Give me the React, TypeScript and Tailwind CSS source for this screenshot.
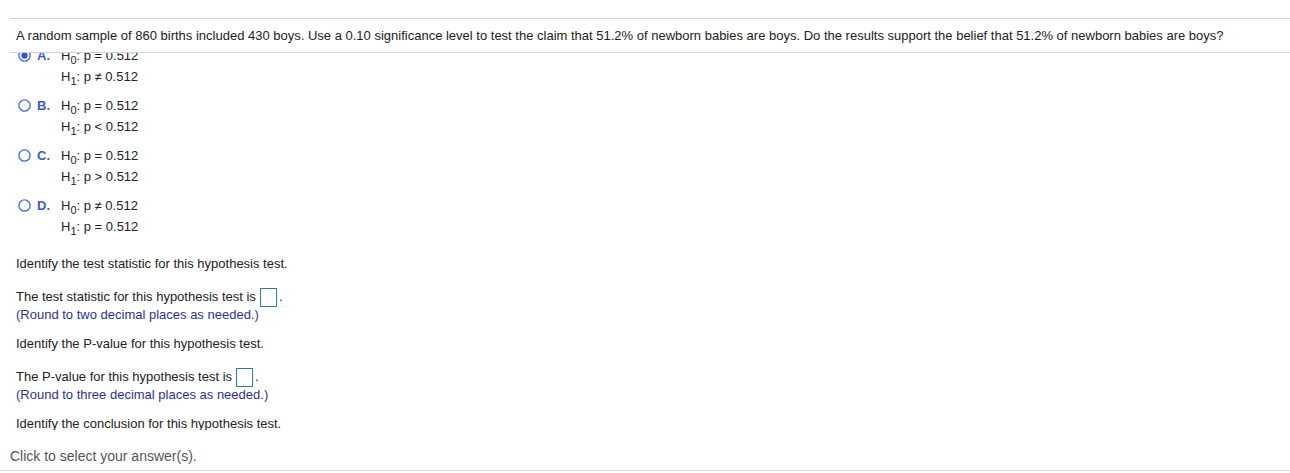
import { useLayoutEffect, useRef } from 'react';

const OPTIONS = [
  { letter: 'A', h0: '=', h1: '≠', selected: true },
  { letter: 'B', h0: '=', h1: '<', selected: false },
  { letter: 'C', h0: '=', h1: '>', selected: false },
  { letter: 'D', h0: '≠', h1: '=', selected: false }
];

function Radio({ selected }: { selected: boolean }) {
  return (
    <svg width="13" height="13" viewBox="0 0 13 13" className="shrink-0">
      <circle cx="6.5" cy="6.5" r="5.6" fill="white" stroke="#4a6fd8" strokeWidth="1.4" />
      {selected && <circle cx="6.5" cy="6.5" r="3.2" fill="#3559c9" />}
    </svg>
  );
}

function Hyp({ n, op }: { n: string; op: string }) {
  return (
    <div className="leading-[21px] whitespace-nowrap">
      H<sub className="text-[11px] top-[4px]">{n}</sub>: p {op} 0.512
    </div>
  );
}

function AnswerBox() {
  return <span className="inline-block w-[17px] h-[19px] border border-[#2a7fa3] bg-white ml-[4px] mr-[2px]" />;
}

export default function App() {
  const viewRef = useRef<HTMLDivElement>(null);

  // the question pane is scrolled a little, option A is half under the header
  useLayoutEffect(() => {
    if (viewRef.current) viewRef.current.scrollTop = 20;
  }, []);

  return (
    <div className="h-[473px] w-full bg-white flex flex-col pt-[18px] text-[13px] text-[#222] font-['Liberation_Sans',Arial,sans-serif]">
      <div className="ml-[10px] border-t border-b border-[#ccd3e0] pl-[6px] py-[8px] leading-[17px] whitespace-nowrap">
        A random sample of 860 births included 430 boys. Use a 0.10 significance level to test the claim that 51.2% of newborn babies are boys. Do the results support the belief that 51.2% of newborn babies are boys?
      </div>

      <div ref={viewRef} className="h-[377px] overflow-hidden">
        <div className="pl-[16px] pt-[12px] pb-[40px]">
          <div className="flex flex-col gap-[8px]">
            {OPTIONS.map((o) => (
              <div key={o.letter} className="flex items-start">
                <div className="h-[21px] flex items-center ml-[2px]">
                  <Radio selected={o.selected} />
                </div>
                <span className="w-[24px] ml-[6px] leading-[21px] font-bold text-[#3a5bc7]">{o.letter}.</span>
                <div>
                  <Hyp n="0" op={o.h0} />
                  <Hyp n="1" op={o.h1} />
                </div>
              </div>
            ))}
          </div>

          <div className="mt-[18px] leading-[17px]">Identify the test statistic for this hypothesis test.</div>
          <div className="mt-[16px] h-[18px] flex items-center">
            The test statistic for this hypothesis test is<AnswerBox />.
          </div>
          <div className="leading-[17px] text-[#2e3192]">(Round to two decimal places as needed.)</div>

          <div className="mt-[12px] leading-[17px]">Identify the P-value for this hypothesis test.</div>
          <div className="mt-[16px] h-[18px] flex items-center">
            The P-value for this hypothesis test is<AnswerBox />.
          </div>
          <div className="leading-[17px] text-[#2e3192]">(Round to three decimal places as needed.)</div>

          <div className="mt-[12px] leading-[17px]">Identify the conclusion for this hypothesis test.</div>
        </div>
      </div>

      <div className="border-b border-[#ccd3e0] pl-[10px] pt-[18px] pb-[6px] text-[14px] leading-[16px] text-[#555]">
        Click to select your answer(s).
      </div>
    </div>
  );
}
